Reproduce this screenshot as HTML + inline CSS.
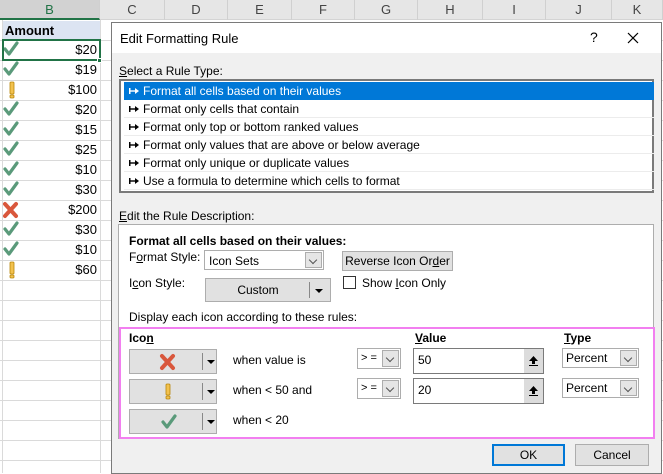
<!DOCTYPE html>
<html><head><meta charset="utf-8"><style>
*{margin:0;padding:0;box-sizing:border-box}
body{width:663px;height:473px;overflow:hidden;background:#fff;font-family:"Liberation Sans",sans-serif;font-size:12px;color:#000;position:relative}
.a{position:absolute}
.hdr{background:#e6e6e6;height:20px;top:0;border-bottom:1px solid #d4d4d4}
.ch{position:absolute;top:0;height:20px;line-height:20px;text-align:center;color:#444;font-size:13px;border-right:1px solid #d0d0d0}
.hl{position:absolute;left:0;width:663px;height:1px;background:#dadada}
.vl{position:absolute;top:20px;width:1px;height:453px;background:#dadada}
.cell{position:absolute;left:3px;width:97px;height:20px;line-height:20px;text-align:right;padding-right:3px;font-size:13px}
.u{text-decoration:underline}
.btn{position:absolute;background:#e1e1e1;border:1px solid #adadad;text-align:center}
.inp{position:absolute;background:#fff;border:1px solid #7a7a7a}
.dd{position:absolute;right:1px;top:1px;bottom:1px;width:17px;border:1px solid #adadad;background:#e5e5e5}
.dd:after{content:"";position:absolute;left:4px;top:4px;width:5px;height:5px;border-right:1px solid #555;border-bottom:1px solid #555;transform:rotate(45deg)}
.tri{position:absolute;width:0;height:0;border-left:4px solid transparent;border-right:4px solid transparent;border-top:4px solid #000}
.li{position:absolute;left:3px;width:530px;height:18px;line-height:18px;padding-left:5px;border-bottom:1px solid #ececec;font-size:12px}
.ar{display:inline-block;width:11px;height:8px;margin-right:3px;vertical-align:0}
.t{font-size:12px}
</style></head><body>
<svg width="0" height="0" style="position:absolute"><defs><g id="arr"><rect x="0" y="1" width="1.5" height="6"/><rect x="0" y="3.3" width="7" height="1.4"/><path d="M6 1 L10 4 L6 7Z"/></g></defs></svg>
<div class="a hdr" style="left:0;width:663px"></div>
<div class="ch" style="left:0;width:100px;background:#d2d2d2;border-bottom:2px solid #217346;color:#217346">B</div>
<div class="ch" style="left:100px;width:65px">C</div>
<div class="ch" style="left:165px;width:63px">D</div>
<div class="ch" style="left:228px;width:64px">E</div>
<div class="ch" style="left:292px;width:63px">F</div>
<div class="ch" style="left:355px;width:63px">G</div>
<div class="ch" style="left:418px;width:65px">H</div>
<div class="ch" style="left:483px;width:63px">I</div>
<div class="ch" style="left:546px;width:66px">J</div>
<div class="ch" style="left:612px;width:51px">K</div>
<div class="vl" style="left:2px"></div>
<div class="vl" style="left:100px"></div>
<div class="a" style="left:3px;top:21px;width:97px;height:19px;background:#dce4f2;font-weight:bold;font-size:13px;line-height:19px;padding-left:2px">Amount</div>
<div class="hl" style="top:40px"></div><div class="hl" style="top:60px"></div><div class="hl" style="top:80px"></div><div class="hl" style="top:100px"></div><div class="hl" style="top:120px"></div><div class="hl" style="top:140px"></div><div class="hl" style="top:160px"></div><div class="hl" style="top:180px"></div><div class="hl" style="top:200px"></div><div class="hl" style="top:220px"></div><div class="hl" style="top:240px"></div><div class="hl" style="top:260px"></div><div class="hl" style="top:280px"></div><div class="hl" style="top:300px"></div><div class="hl" style="top:320px"></div><div class="hl" style="top:340px"></div><div class="hl" style="top:360px"></div><div class="hl" style="top:380px"></div><div class="hl" style="top:400px"></div><div class="hl" style="top:420px"></div><div class="hl" style="top:440px"></div><div class="hl" style="top:460px"></div>
<svg class="a" style="left:0;top:40px" width="100" height="240">
<defs>
<path id="ck" d="M5 9 L9 14 L17 3" fill="none" stroke="#5a9a7a" stroke-width="3.2" stroke-linecap="round" stroke-linejoin="round"/>
<g id="ex"><rect x="10" y="2" width="4" height="12" rx="1" fill="#f2c14e" stroke="#b8860b" stroke-width="0.8"/><rect x="10" y="15" width="4" height="3" rx="1" fill="#f2c14e" stroke="#b8860b" stroke-width="0.8"/></g>
<path id="xx" d="M5 4 L16 16 M16 4 L5 16" stroke="#d9573c" stroke-width="4" stroke-linecap="round"/>
</defs>
<use href="#ck" y="0"/><use href="#ck" y="20"/><use href="#ex" y="40"/><use href="#ck" y="60"/><use href="#ck" y="80"/><use href="#ck" y="100"/><use href="#ck" y="120"/><use href="#ck" y="140"/><use href="#xx" y="160"/><use href="#ck" y="180"/><use href="#ck" y="200"/><use href="#ex" y="220"/>
</svg>
<div class="cell" style="top:40px">$20</div><div class="cell" style="top:60px">$19</div><div class="cell" style="top:80px">$100</div><div class="cell" style="top:100px">$20</div><div class="cell" style="top:120px">$15</div><div class="cell" style="top:140px">$25</div><div class="cell" style="top:160px">$10</div><div class="cell" style="top:180px">$30</div><div class="cell" style="top:200px">$200</div><div class="cell" style="top:220px">$30</div><div class="cell" style="top:240px">$10</div><div class="cell" style="top:260px">$60</div>
<div class="a" style="left:2px;top:39px;width:99px;height:22px;border:2px solid #217346"></div>
<div class="a" style="left:97px;top:58px;width:5px;height:5px;background:#217346;border:1px solid #fff"></div>

<div class="a" style="left:111px;top:22px;width:551px;height:452px;background:#f0f0f0;border:1px solid #7a7a7a">
 <div class="a" style="left:0;top:0;width:549px;height:30px;background:#fff"></div>
 <div class="a" style="left:8px;top:8px;font-size:13px">Edit Formatting Rule</div>
 <div class="a" style="left:478px;top:6px;font-size:14px">?</div>
 <svg class="a" style="left:515px;top:9px" width="12" height="12"><path d="M1 1L11 11M11 1L1 11" stroke="#000" stroke-width="1.2"/></svg>
 <div class="a t" style="left:7px;top:41px"><span class="u">S</span>elect a Rule Type:</div>
 <div class="a" style="left:7px;top:56px;width:535px;height:114px;background:#fff;border:2px solid #7a7a7a">
  <div class="li" style="top:1px;background:#0078d7;color:#fff;border-color:#0078d7"><svg class="ar" fill="#fff"><use href="#arr"/></svg>Format all cells based on their values</div>
  <div class="li" style="top:19px"><svg class="ar"><use href="#arr"/></svg>Format only cells that contain</div>
  <div class="li" style="top:37px"><svg class="ar"><use href="#arr"/></svg>Format only top or bottom ranked values</div>
  <div class="li" style="top:55px"><svg class="ar"><use href="#arr"/></svg>Format only values that are above or below average</div>
  <div class="li" style="top:73px"><svg class="ar"><use href="#arr"/></svg>Format only unique or duplicate values</div>
  <div class="li" style="top:91px"><svg class="ar"><use href="#arr"/></svg>Use a formula to determine which cells to format</div>
 </div>
 <div class="a t" style="left:7px;top:186px"><span class="u">E</span>dit the Rule Description:</div>
 <div class="a" style="left:6px;top:201px;width:536px;height:215px;background:#fff;border:1px solid #adadad"></div>
 <div class="a t" style="left:17px;top:211px;font-weight:bold">Format all cells based on their values:</div>
 <div class="a t" style="left:17px;top:227px">F<span class="u">o</span>rmat Style:</div>
 <div class="inp" style="left:92px;top:227px;width:120px;height:20px;border-color:#adadad"><span class="t" style="position:absolute;left:4px;top:3px">Icon Sets</span><div class="dd"></div></div>
 <div class="btn t" style="left:230px;top:228px;width:111px;height:20px;line-height:18px">Reverse Icon Or<span class="u">d</span>er</div>
 <div class="a t" style="left:17px;top:253px">I<span class="u">c</span>on Style:</div>
 <div class="btn t" style="left:93px;top:255px;width:126px;height:24px;line-height:22px"><span style="position:absolute;left:0;width:104px;text-align:center">Custom</span><span style="position:absolute;left:103px;top:3px;width:1px;height:16px;background:#888"></span><span class="tri" style="left:109px;top:10px"></span></div>
 <div class="a" style="left:231px;top:253px;width:13px;height:13px;background:#fff;border:1px solid #333"></div>
 <div class="a t" style="left:250px;top:253px">Show <span class="u">I</span>con Only</div>
 <div class="a t" style="left:17px;top:287px">Display each icon according to these rules:</div>
 <div class="a" style="left:7px;top:304px;width:536px;height:112px;border:2px solid #f27ff0"></div>
 <div class="a t" style="left:17px;top:308px;font-weight:bold">Ico<span class="u">n</span></div>
 <div class="a t" style="left:303px;top:308px;font-weight:bold"><span class="u">V</span>alue</div>
 <div class="a t" style="left:452px;top:308px;font-weight:bold"><span class="u">T</span>ype</div>

 <div class="btn" style="left:17px;top:326px;width:88px;height:25px"><svg class="a" style="left:28px;top:3px" width="20" height="18"><path d="M4 3 L15 15 M15 3 L4 15" stroke="#d9573c" stroke-width="4" stroke-linecap="round"/></svg><span style="position:absolute;left:72px;top:3px;width:1px;height:17px;background:#888"></span><span class="tri" style="left:77px;top:10px"></span></div>
 <div class="btn" style="left:17px;top:356px;width:88px;height:25px"><svg class="a" style="left:30px;top:3px" width="20" height="18"><rect x="6" y="1" width="4" height="11" rx="1" fill="#f2c14e" stroke="#b8860b" stroke-width="0.8"/><rect x="6" y="13" width="4" height="3" rx="1" fill="#f2c14e" stroke="#b8860b" stroke-width="0.8"/></svg><span style="position:absolute;left:72px;top:3px;width:1px;height:17px;background:#888"></span><span class="tri" style="left:77px;top:10px"></span></div>
 <div class="btn" style="left:17px;top:386px;width:88px;height:25px"><svg class="a" style="left:30px;top:3px" width="20" height="18"><path d="M3 9 L7 14 L15 3" fill="none" stroke="#5a9a7a" stroke-width="3.2" stroke-linecap="round" stroke-linejoin="round"/></svg><span style="position:absolute;left:72px;top:3px;width:1px;height:17px;background:#888"></span><span class="tri" style="left:77px;top:10px"></span></div>
 <div class="a t" style="left:121px;top:330px">when value is</div>
 <div class="a t" style="left:121px;top:360px">when &lt; 50 and</div>
 <div class="a t" style="left:121px;top:390px">when &lt; 20</div>

 <div class="inp" style="left:245px;top:325px;width:44px;height:21px;border-color:#adadad"><span style="position:absolute;left:3px;top:3px;font-size:11px">&gt; =</span><div class="dd"></div></div>
 <div class="inp" style="left:245px;top:355px;width:44px;height:21px;border-color:#adadad"><span style="position:absolute;left:3px;top:3px;font-size:11px">&gt; =</span><div class="dd"></div></div>
 <div class="inp" style="left:301px;top:325px;width:131px;height:26px"><span class="t" style="position:absolute;left:4px;top:4px">50</span><div class="a" style="right:0;top:0;width:19px;height:24px;background:#dcdcdc"><svg class="a" style="left:5px;top:7px" width="9" height="10"><path d="M4.5 0 L9 5 L6 5 L6 8 L3 8 L3 5 L0 5Z" fill="#000"/><rect x="0" y="9" width="9" height="1" fill="#000"/></svg></div></div>
 <div class="inp" style="left:301px;top:355px;width:131px;height:26px"><span class="t" style="position:absolute;left:4px;top:4px">20</span><div class="a" style="right:0;top:0;width:19px;height:24px;background:#dcdcdc"><svg class="a" style="left:5px;top:7px" width="9" height="10"><path d="M4.5 0 L9 5 L6 5 L6 8 L3 8 L3 5 L0 5Z" fill="#000"/><rect x="0" y="9" width="9" height="1" fill="#000"/></svg></div></div>
 <div class="inp" style="left:450px;top:325px;width:77px;height:20px;border-color:#adadad"><span class="t" style="position:absolute;left:3px;top:2px">Percent</span><div class="dd"></div></div>
 <div class="inp" style="left:450px;top:355px;width:77px;height:20px;border-color:#adadad"><span class="t" style="position:absolute;left:3px;top:2px">Percent</span><div class="dd"></div></div>

 <div class="btn" style="left:380px;top:421px;width:73px;height:22px;line-height:18px;border:2px solid #0078d7;font-size:12px">OK</div>
 <div class="btn" style="left:463px;top:421px;width:74px;height:22px;line-height:20px;font-size:12px">Cancel</div>
</div>
</body></html>
